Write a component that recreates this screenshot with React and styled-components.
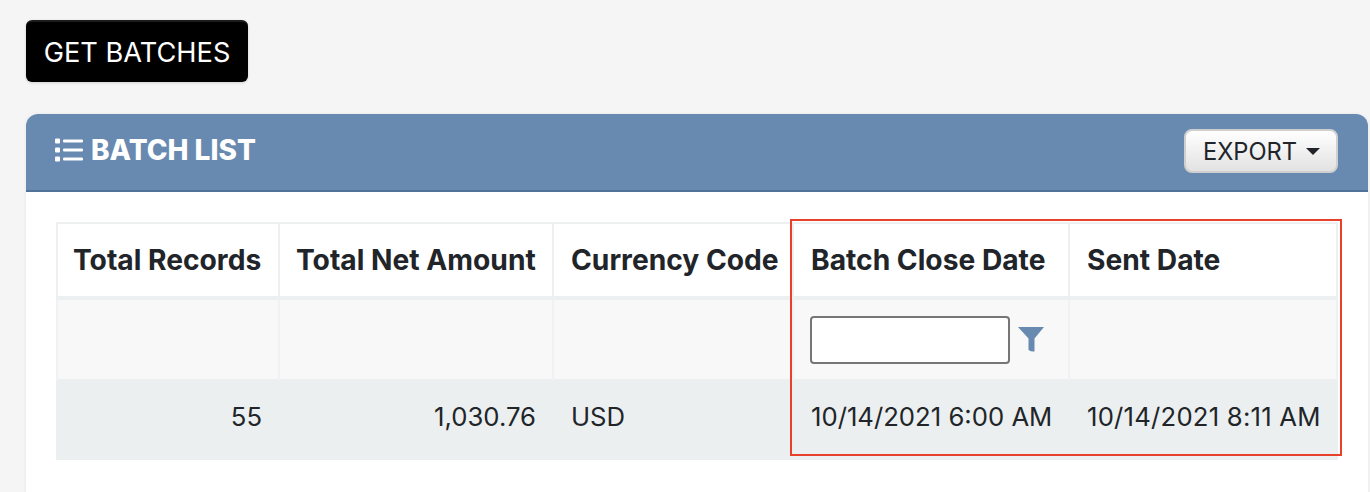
import styled, { createGlobalStyle } from "styled-components"

const GlobalStyle = createGlobalStyle`
html, body {
    margin: 0;
    padding: 0;
    background: #f5f5f5;
    font-family: 'Inter', 'Liberation Sans', sans-serif;
    color: #212529;
}
`

export default function App() {
    return (
        <Page>
            <GlobalStyle />
            <GetButton>GET BATCHES</GetButton>
            <Panel>
                <PanelHeader>
                    <PanelTitle>
                        <ListIcon />
                        BATCH LIST
                    </PanelTitle>
                    <ExportButton>
                        EXPORT
                        <Caret />
                    </ExportButton>
                </PanelHeader>
                <PanelBody>
                    <TableWrap>
                        <Table>
                            <colgroup>
                                <col width="222" />
                                <col width="274" />
                                <col width="240" />
                                <col width="276" />
                                <col width="268" />
                            </colgroup>
                            <thead>
                                <tr>
                                    <HeadCell>Total Records</HeadCell>
                                    <HeadCell>Total Net Amount</HeadCell>
                                    <HeadCell>Currency Code</HeadCell>
                                    <HeadCell>Batch Close Date</HeadCell>
                                    <HeadCell>Sent Date</HeadCell>
                                </tr>
                            </thead>
                            <tbody>
                                <tr>
                                    <FilterCell />
                                    <FilterCell />
                                    <FilterCell />
                                    <FilterCell>
                                        <FilterRow>
                                            <FilterInput />
                                            <FunnelIcon />
                                        </FilterRow>
                                    </FilterCell>
                                    <FilterCell />
                                </tr>
                                <tr>
                                    <DataCell $right>55</DataCell>
                                    <DataCell $right>1,030.76</DataCell>
                                    <DataCell>USD</DataCell>
                                    <DataCell>10/14/2021 6:00 AM</DataCell>
                                    <DataCell $spacing="0.22px">10/14/2021 8:11 AM</DataCell>
                                </tr>
                            </tbody>
                        </Table>
                        <Highlight />
                    </TableWrap>
                </PanelBody>
            </Panel>
        </Page>
    )
}

function ListIcon() {
    return (
        <svg width="30" height="24" viewBox="0 0 30 24" fill="#fff">
            <rect x="1" y="0.5" width="5" height="5" rx="1" />
            <rect x="1" y="9.5" width="5" height="5" rx="1" />
            <rect x="1" y="18.5" width="5" height="5" rx="1" />
            <rect x="9" y="1.5" width="20" height="3" rx="1" />
            <rect x="9" y="10.5" width="20" height="3" rx="1" />
            <rect x="9" y="19.5" width="20" height="3" rx="1" />
        </svg>
    )
}

function FunnelIcon() {
    return (
        <svg width="28" height="28" viewBox="0 0 28 28" fill="#6889b0">
            <path d="M1 1 H27 L17.5 12.5 V25.5 Q14.5 26 11.5 24 V12.5 Z" />
        </svg>
    )
}

const Page = styled.div`
width: 1370px;
height: 492px;
box-sizing: border-box;
padding: 20px 2px 0 26px;
overflow: hidden;
`

const GetButton = styled.button`
display: block;
width: 222px;
height: 62px;
padding: 0;
background: #000;
border: none;
border-top: 2px solid #1c1c1c;
border-radius: 6px;
box-shadow: 0 1px 3px rgba(0, 0, 0, 0.15);
color: #fff;
font-family: inherit;
font-size: 27.2px;
font-weight: 400;
`

const Panel = styled.section`
margin-top: 32px;
height: 400px;
background: #fff;
border-radius: 12px 12px 0 0;
box-shadow: 0 0 4px rgba(0, 0, 0, 0.06);
`

const PanelHeader = styled.header`
height: 78px;
box-sizing: border-box;
padding: 0 30px 0 28px;
display: flex;
align-items: center;
justify-content: space-between;
background: #6889b0;
border-bottom: 2px solid #527199;
border-radius: 12px 12px 0 0;
`

const PanelTitle = styled.h2`
margin: 0 0 4px;
display: flex;
align-items: center;
gap: 7px;
color: #fff;
font-size: 28px;
font-weight: 800;
line-height: 30px;
`

const ExportButton = styled.button`
width: 154px;
height: 44px;
margin-bottom: 2px;
padding: 0 0 0 1px;
display: flex;
align-items: center;
justify-content: center;
gap: 9px;
background: linear-gradient(#ffffff, #e2e2e2);
border: 2px solid #cfcfcf;
border-radius: 8px;
color: #212529;
font-family: inherit;
font-size: 23.7px;
font-weight: 400;
`

const Caret = styled.span`
width: 0;
height: 0;
border-left: 7px solid transparent;
border-right: 7px solid transparent;
border-top: 7px solid #212529;
`

const PanelBody = styled.div`
padding: 30px 30px 0;
`

const TableWrap = styled.div`
position: relative;
width: 1282px;
`

const Table = styled.table`
width: 1282px;
table-layout: fixed;
border-collapse: collapse;
font-size: 25.7px;
`

const HeadCell = styled.th`
height: 75px;
box-sizing: border-box;
padding: 0 16px 0 17px;
background: #fff;
border: 2px solid #edf0f1;
border-bottom-width: 4px;
text-align: left;
font-size: 28.2px;
font-weight: 700;
white-space: nowrap;

&:first-child {
    padding-left: 15px;
}

&:nth-child(2) {
    padding-left: 16px;
}
`

const FilterCell = styled.td`
height: 82px;
box-sizing: border-box;
padding: 0 16px;
background: #f8f8f8;
border: 2px solid #eff1f2;
border-bottom: none;
`

const FilterRow = styled.div`
display: flex;
align-items: center;
gap: 7px;
`

const FilterInput = styled.input`
width: 200px;
height: 48px;
box-sizing: border-box;
background: #fff;
border: 2px solid #767676;
border-radius: 4px;
`

const DataCell = styled.td`
height: 79px;
box-sizing: border-box;
padding: 0 16px 7px 17px;
background: #eceff0;
border: 2px solid #eceff0;
text-align: ${props => (props.$right ? "right" : "left")};
letter-spacing: ${props => props.$spacing || "normal"};
white-space: nowrap;
`

const Highlight = styled.div`
position: absolute;
left: 734px;
top: -3px;
width: 552px;
height: 237px;
box-sizing: border-box;
border: 2px solid #e8412b;
pointer-events: none;
`
